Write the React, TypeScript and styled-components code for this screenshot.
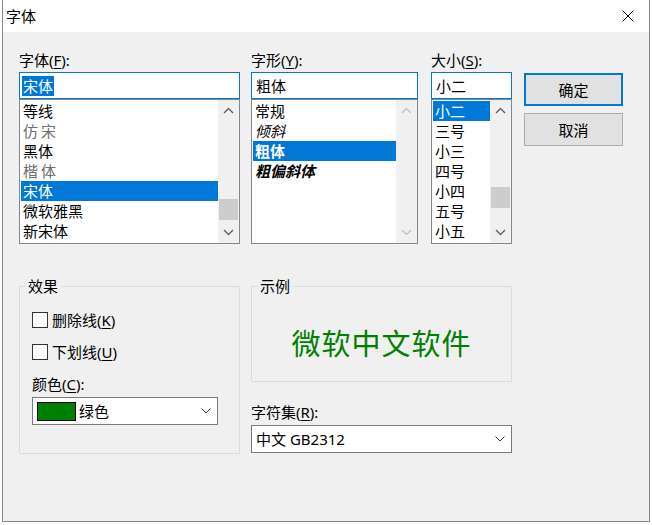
import React from 'react'
import styled, { createGlobalStyle } from 'styled-components'

const GlobalStyle = createGlobalStyle`
  html, body {
    margin: 0;
    padding: 0;
    background: #ffffff;
  }
  body {
    font-family: "Noto Sans", "Noto Sans CJK SC", sans-serif;
    font-size: 15px;
    color: #000;
  }
  * {
    box-sizing: border-box;
  }
`

const fontItems = [
    { name: '等线' },
    { name: '仿宋', faint: true },
    { name: '黑体' },
    { name: '楷体', faint: true },
    { name: '宋体', selected: true },
    { name: '微软雅黑' },
    { name: '新宋体' },
]

const styleItems = [
    { name: '常规' },
    { name: '倾斜', italic: true },
    { name: '粗体', bold: true, selected: true },
    { name: '粗偏斜体', bold: true, italic: true },
]

const sizeItems = ['小二', '三号', '小三', '四号', '小四', '五号', '小五']

interface ChevronProps {
    dir: 'up' | 'down',
    disabled?: boolean,
}

const Chevron: React.FC<ChevronProps> = ({ dir, disabled }) => (
    <svg width="11" height="7" viewBox="0 0 11 7">
        <polyline
            points={dir === 'up' ? '1,6 5.5,1.5 10,6' : '1,1 5.5,5.5 10,1'}
            fill="none"
            stroke={disabled ? '#c4c4c4' : '#606060'}
            strokeWidth="1.4"
        />
    </svg>
)

const DropArrow: React.FC = () => (
    <svg width="10" height="6" viewBox="0 0 10 6">
        <polyline points="0.5,0.5 5,5 9.5,0.5" fill="none" stroke="#404040" strokeWidth="1" />
    </svg>
)

interface ScrollBarProps {
    thumbTop?: number,
    disabled?: boolean,
}

const ScrollBar: React.FC<ScrollBarProps> = ({ thumbTop, disabled }) => (
    <StyledScroll>
        <StyledArrowBox>
            <Chevron dir="up" disabled={disabled} />
        </StyledArrowBox>
        <StyledTrack>
            {thumbTop != null && <StyledThumb $top={thumbTop} />}
        </StyledTrack>
        <StyledArrowBox>
            <Chevron dir="down" disabled={disabled} />
        </StyledArrowBox>
    </StyledScroll>
)

const App: React.FC = () => {
    return (
        <>
            <GlobalStyle />
            <StyledDialog>
                <StyledTitleBar>
                    <StyledTitle>字体</StyledTitle>
                    <StyledClose>
                        <svg width="12" height="12" viewBox="0 0 12 12">
                            <path d="M0.5 0.5 L11.5 11.5 M11.5 0.5 L0.5 11.5" stroke="#000" strokeWidth="1" />
                        </svg>
                    </StyledClose>
                </StyledTitleBar>

                <StyledBody>
                    <StyledRow>
                        <StyledColumn $width={221}>
                            <StyledLabel>字体(<StyledKey>F</StyledKey>):</StyledLabel>
                            <StyledTextBox $focused>
                                <StyledSelection>宋体</StyledSelection>
                            </StyledTextBox>
                            <StyledList>
                                <StyledItems>
                                    {fontItems.map((item) => (
                                        <StyledItem key={item.name} $selected={item.selected} $faint={item.faint}>
                                            {item.name}
                                        </StyledItem>
                                    ))}
                                </StyledItems>
                                <ScrollBar thumbTop={78} />
                            </StyledList>
                        </StyledColumn>

                        <StyledColumn $width={167} $offset={11}>
                            <StyledLabel>字形(<StyledKey>Y</StyledKey>):</StyledLabel>
                            <StyledTextBox $focused>
                                <StyledInputText>粗体</StyledInputText>
                            </StyledTextBox>
                            <StyledList>
                                <StyledItems>
                                    {styleItems.map((item) => (
                                        <StyledItem
                                            key={item.name}
                                            $selected={item.selected}
                                            $bold={item.bold}
                                            $italic={item.italic}
                                        >
                                            {item.name}
                                        </StyledItem>
                                    ))}
                                </StyledItems>
                                <ScrollBar disabled />
                            </StyledList>
                        </StyledColumn>

                        <StyledColumn $width={81} $offset={13}>
                            <StyledLabel>大小(<StyledKey>S</StyledKey>):</StyledLabel>
                            <StyledTextBox $focused>
                                <StyledInputText>小二</StyledInputText>
                            </StyledTextBox>
                            <StyledList>
                                <StyledItems>
                                    {sizeItems.map((name, i) => (
                                        <StyledItem key={name} $selected={i === 0}>
                                            {name}
                                        </StyledItem>
                                    ))}
                                </StyledItems>
                                <ScrollBar thumbTop={66} />
                            </StyledList>
                        </StyledColumn>

                        <StyledButtonColumn>
                            <StyledButton $default>确定</StyledButton>
                            <StyledButton>取消</StyledButton>
                        </StyledButtonColumn>
                    </StyledRow>

                    <StyledLowerRow>
                        <StyledGroup $width={221} $height={177}>
                            <StyledLegend>效果</StyledLegend>
                            <StyledEffects>
                                <StyledCheckRow>
                                    <StyledCheckbox />
                                    <span>删除线(<StyledKey>K</StyledKey>)</span>
                                </StyledCheckRow>
                                <StyledCheckRow>
                                    <StyledCheckbox />
                                    <span>下划线(<StyledKey>U</StyledKey>)</span>
                                </StyledCheckRow>
                                <StyledColorLabel>颜色(<StyledKey>C</StyledKey>):</StyledColorLabel>
                                <StyledCombo $width={186}>
                                    <StyledComboValue>
                                        <StyledSwatch $color="#008000" />
                                        <span>绿色</span>
                                    </StyledComboValue>
                                    <DropArrow />
                                </StyledCombo>
                            </StyledEffects>
                        </StyledGroup>

                        <StyledColumn $width={261} $offset={11}>
                            <StyledGroup $width={261} $height={105}>
                                <StyledLegend>示例</StyledLegend>
                                <StyledSample>微软中文软件</StyledSample>
                            </StyledGroup>
                            <StyledCharsetLabel>字符集(<StyledKey>R</StyledKey>):</StyledCharsetLabel>
                            <StyledCombo $width={261}>
                                <StyledComboValue>中文 GB2312</StyledComboValue>
                                <DropArrow />
                            </StyledCombo>
                        </StyledColumn>
                    </StyledLowerRow>
                </StyledBody>
            </StyledDialog>
        </>
    )
}

const StyledDialog = styled.div`
    margin-left: 2px;
    width: 648px;
    height: 522px;
    background: #f0f0f0;
    border: 1px solid #8a8a8a;
    border-top: none;
    display: flex;
    flex-direction: column;
`

const StyledTitleBar = styled.div`
    height: 32px;
    background: #ffffff;
    display: flex;
    align-items: center;
    justify-content: space-between;
    padding-left: 3px;
`

const StyledTitle = styled.div`
    font-size: 15px;
    line-height: 18px;
`

const StyledClose = styled.div`
    width: 42px;
    height: 32px;
    display: flex;
    align-items: center;
    justify-content: center;
`

const StyledBody = styled.div`
    padding: 19px 0 0 16px;
    display: flex;
    flex-direction: column;
`

const StyledRow = styled.div`
    display: flex;
    align-items: flex-start;
`

const StyledLowerRow = styled.div`
    display: flex;
    align-items: flex-start;
    margin-top: 33px;
`

const StyledColumn = styled.div<{ $width: number, $offset?: number }>`
    display: flex;
    flex-direction: column;
    width: ${(props) => props.$width}px;
    margin-left: ${(props) => props.$offset || 0}px;
`

const StyledLabel = styled.div`
    line-height: 18px;
    height: 18px;
    margin-bottom: 3px;
    white-space: nowrap;
`

const StyledKey = styled.span`
    text-decoration: underline;
    text-underline-offset: 2px;
`

const StyledTextBox = styled.div<{ $focused?: boolean }>`
    height: 27px;
    background: #ffffff;
    border: 1px solid ${(props) => props.$focused ? '#0078d7' : '#7a7a7a'};
    display: flex;
    align-items: center;
    padding-left: 2px;
`

const StyledSelection = styled.span`
    background: #0078d7;
    color: #ffffff;
    line-height: 20px;
    padding: 0 1px;
`

const StyledInputText = styled.span`
    line-height: 20px;
    padding-left: 2px;
`

const StyledList = styled.div`
    height: 145px;
    background: #ffffff;
    border: 1px solid #828790;
    display: flex;
`

const StyledItems = styled.div`
    flex: 1;
    padding: 1px 0 0 1px;
    display: flex;
    flex-direction: column;
    overflow: hidden;
`

const StyledItem = styled.div<{ $selected?: boolean, $faint?: boolean, $bold?: boolean, $italic?: boolean }>`
    height: 20px;
    line-height: 20px;
    padding-left: 2px;
    white-space: nowrap;
    background: ${(props) => props.$selected ? '#0078d7' : 'transparent'};
    color: ${(props) => props.$selected ? '#ffffff' : props.$faint ? '#6e6e6e' : '#000000'};
    letter-spacing: ${(props) => props.$faint ? '3px' : '0'};
    font-weight: ${(props) => props.$bold ? 700 : 400};
    font-style: ${(props) => props.$italic ? 'italic' : 'normal'};
`

const StyledScroll = styled.div`
    width: 21px;
    background: #f0f0f0;
    display: flex;
    flex-direction: column;
`

const StyledArrowBox = styled.div`
    height: 21px;
    display: flex;
    align-items: center;
    justify-content: center;
`

const StyledTrack = styled.div`
    flex: 1;
    display: flex;
    flex-direction: column;
`

const StyledThumb = styled.div<{ $top: number }>`
    margin: ${(props) => props.$top}px 1px 0 1px;
    height: 21px;
    background: #cdcdcd;
`

const StyledButtonColumn = styled.div`
    width: 99px;
    margin-left: 12px;
    margin-top: 22px;
    display: flex;
    flex-direction: column;
    gap: 7px;
`

const StyledButton = styled.div<{ $default?: boolean }>`
    height: 33px;
    background: #e1e1e1;
    border: ${(props) => props.$default ? '2px solid #0078d7' : '1px solid #adadad'};
    display: flex;
    align-items: center;
    justify-content: center;
    line-height: 18px;
`

const StyledGroup = styled.fieldset<{ $width: number, $height: number }>`
    margin: 0;
    padding: 0;
    min-width: 0;
    width: ${(props) => props.$width}px;
    height: ${(props) => props.$height}px;
    border: 1px solid #dcdcdc;
`

const StyledLegend = styled.legend`
    margin-left: 5px;
    padding: 0 3px;
    line-height: 18px;
    font-size: 15px;
`

const StyledEffects = styled.div`
    padding: 16px 0 0 12px;
    display: flex;
    flex-direction: column;
`

const StyledCheckRow = styled.div`
    display: flex;
    align-items: center;
    gap: 4px;
    height: 18px;
    line-height: 18px;
    white-space: nowrap;

    & + & {
        margin-top: 14px;
    }
`

const StyledCheckbox = styled.span`
    width: 16px;
    height: 16px;
    background: #ffffff;
    border: 1px solid #333333;
`

const StyledColorLabel = styled.div`
    margin-top: 14px;
    line-height: 18px;
    height: 18px;
    margin-bottom: 4px;
`

const StyledCombo = styled.div<{ $width: number }>`
    width: ${(props) => props.$width}px;
    height: 28px;
    background: #ffffff;
    border: 1px solid #7a7a7a;
    display: flex;
    align-items: center;
    justify-content: space-between;
    padding: 0 6px 0 3px;
`

const StyledComboValue = styled.div`
    display: flex;
    align-items: center;
    gap: 3px;
    line-height: 18px;
    padding-left: 1px;
`

const StyledSwatch = styled.span<{ $color: string }>`
    width: 39px;
    height: 19px;
    background: ${(props) => props.$color};
    border: 1px solid #000000;
`

const StyledSample = styled.div`
    height: 86px;
    padding-top: 8px;
    display: flex;
    align-items: center;
    justify-content: center;
    color: #008000;
    font-family: "Noto Sans CJK SC", sans-serif;
    font-size: 29px;
    letter-spacing: 1px;
`

const StyledCharsetLabel = styled.div`
    margin-top: 21px;
    line-height: 18px;
    height: 18px;
    margin-bottom: 4px;
`

export default App
